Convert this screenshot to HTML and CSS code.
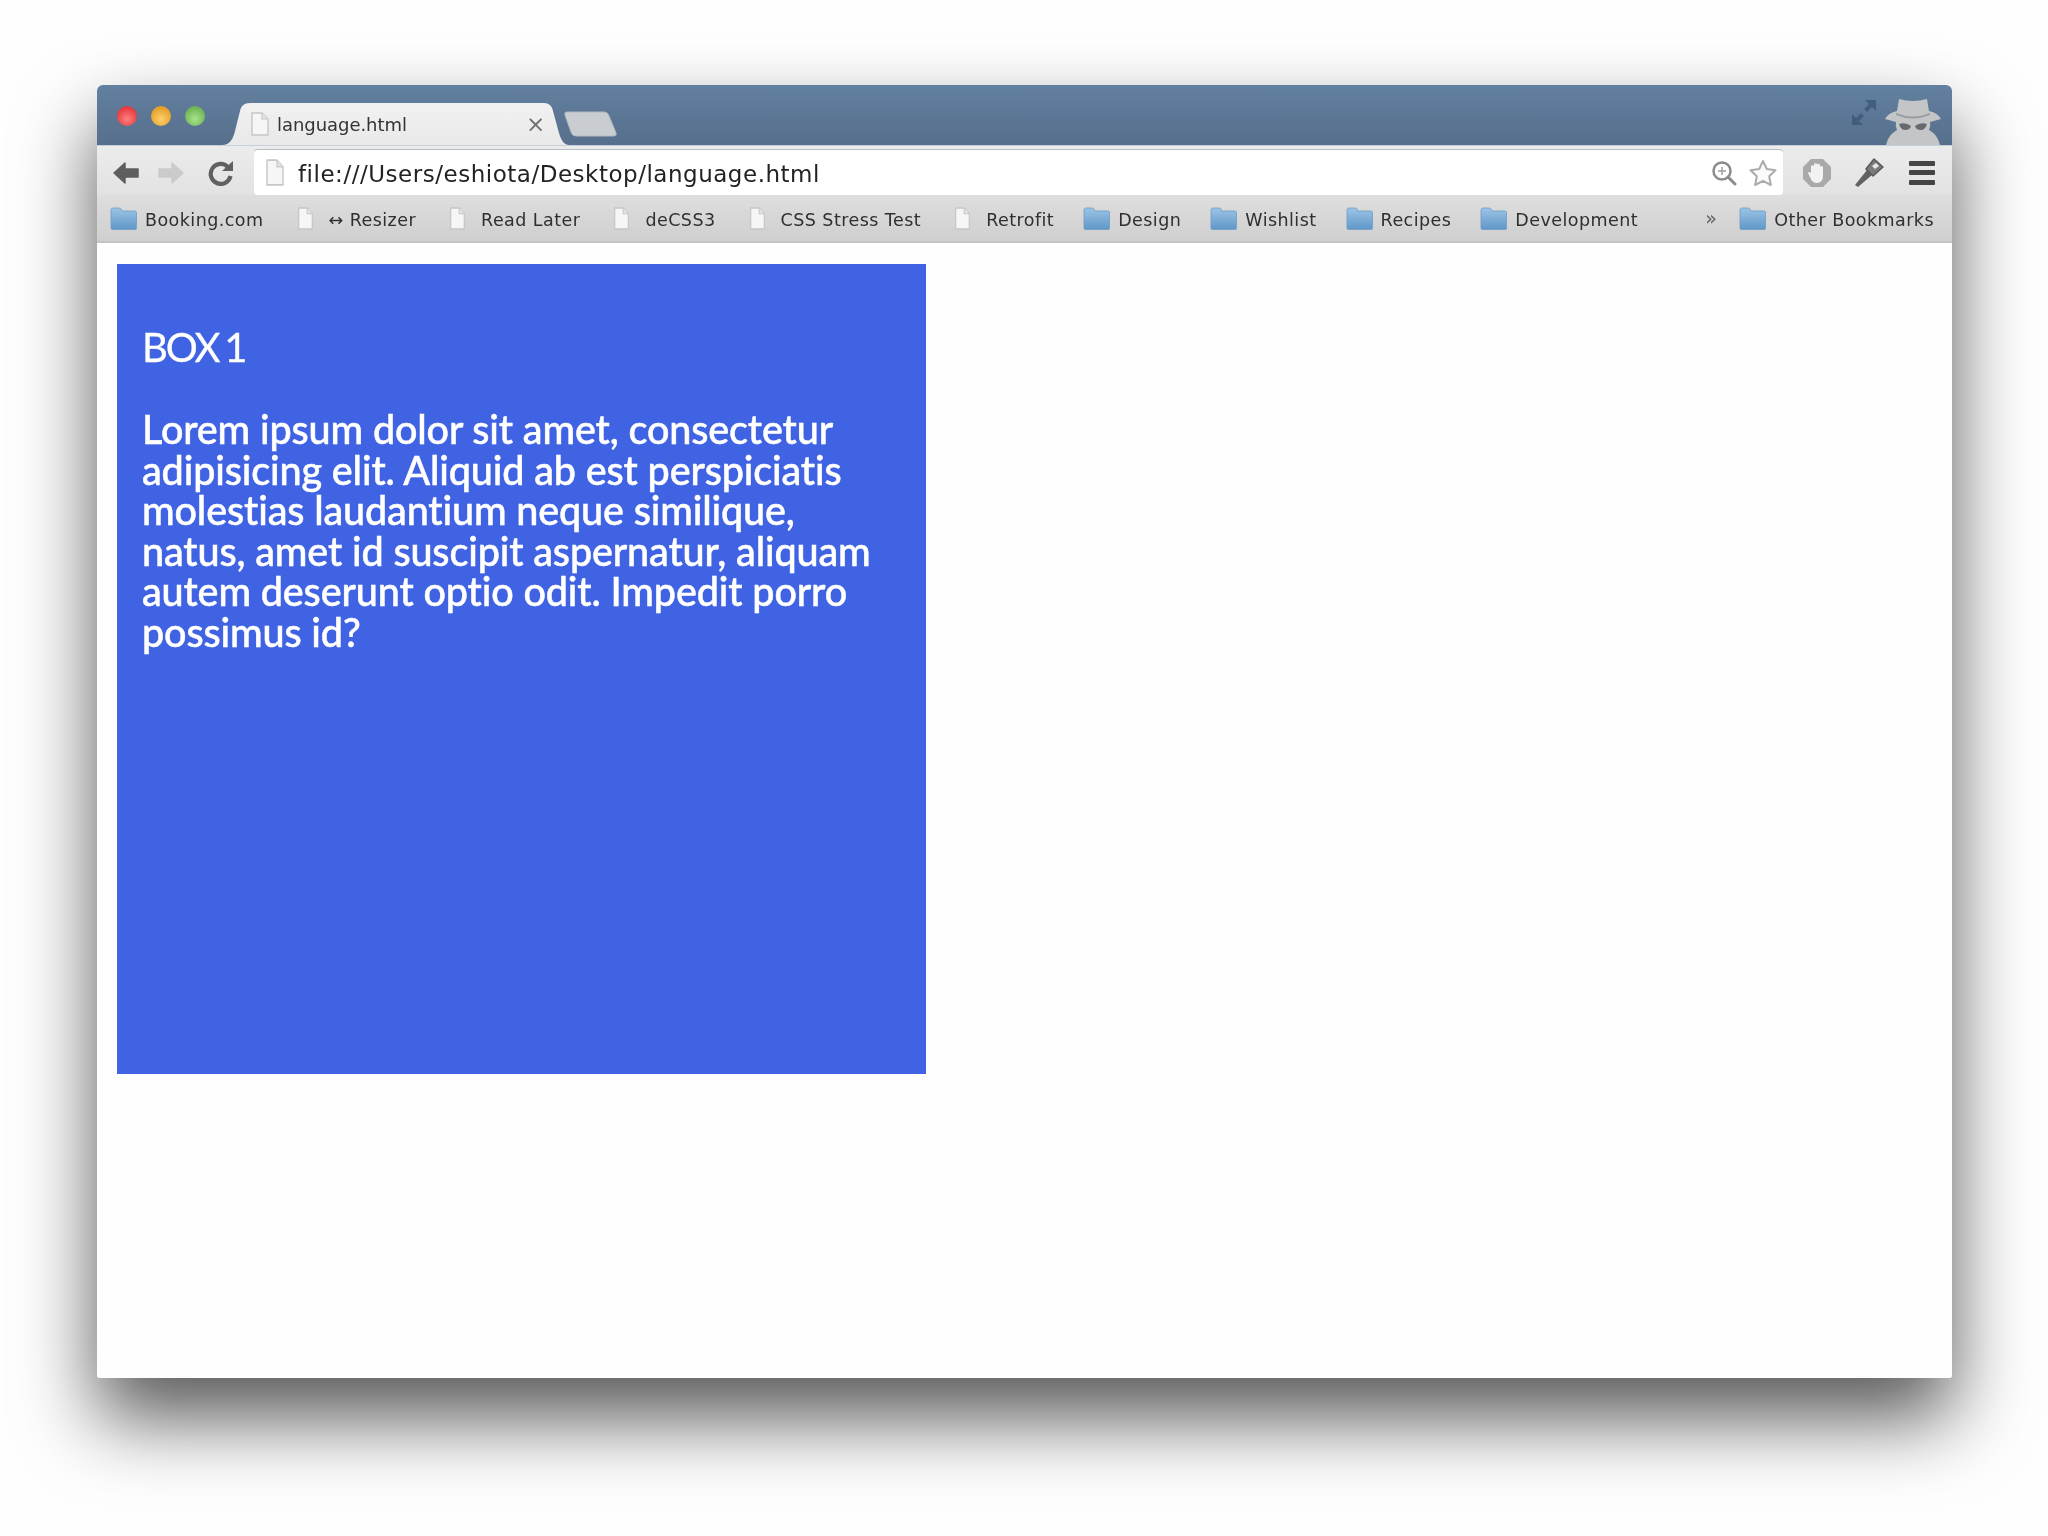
FILE: index.html
```html
<!DOCTYPE html>
<html lang="en">
<head>
<meta charset="utf-8">
<title>language.html</title>
<link rel="stylesheet" href="styles.css">
</head>
<body>
<svg class="defs" width="0" height="0" aria-hidden="true">
  <defs>
    <linearGradient id="folderFill" x1="0" y1="0" x2="0" y2="1"><stop offset="0" stop-color="#9cc4e6"/><stop offset="1" stop-color="#5f97c8"/></linearGradient>
    <linearGradient id="tabFill" x1="0" y1="0" x2="0" y2="1"><stop offset="0" stop-color="#f1f1f2"/><stop offset="1" stop-color="#e9e9ea"/></linearGradient>
    <symbol id="folder" viewBox="0 0 27 23" preserveAspectRatio="none"><path d="M1 3q0-2 2-2h6q2 0 3 3h13q1.500 0 1.500 1.500V21q0 1.500-1.500 1.500H2.500Q1 22.500 1 21z" fill="url(#folderFill)" stroke="#6f9cc4" stroke-width=".8"/></symbol>
    <symbol id="page" viewBox="0 0 20 24" preserveAspectRatio="none"><path d="M2 1h10l6 6v16H2z" fill="#f6f6f6" stroke="#c6c6c6" stroke-width="1.400"/><path d="M12 1v6h6" fill="#e4e4e4" stroke="#c6c6c6" stroke-width="1.200"/></symbol>
  </defs>
</svg>
<div class="stage">
  <div class="window">
    <div class="tabstrip">
      <div class="lights">
        <span class="light red"></span><span class="light amber"></span><span class="light green"></span>
      </div>
      <div class="tab">
        <svg class="tab-shape" viewBox="0 0 347 42" width="347" height="42"><path d="M0 42C8 42 11 36 13 28L18 8C19 3 22 0 28 0H322C327 0 330 3 331 8L337 30C339 37 342 42 347 42Z" fill="url(#tabFill)"/></svg>
        <svg class="tab-icon" width="20" height="24"><use href="#page"/></svg>
        <span class="tab-title">language.html</span>
        <span class="tab-close">×</span>
      </div>
      <svg class="newtab" viewBox="0 0 53 26" width="53" height="26"><path d="M3 1H40Q44 1 45 5L52 22Q53 25 49 25H12Q8 25 7 21L1 4Q0 1 3 1Z" fill="#c9cdd1" stroke="#b3bac1" stroke-width="1"/></svg>
      <div class="strip-space"></div>
      <svg class="fullscreen" viewBox="0 0 24 25" width="24" height="25"><g fill="#3f5f80"><path d="M24 0V11L20 7 15 12 12 9 17 4 13 0Z"/><path d="M0 25V14L4 18 9 13 12 16 7 21 11 25Z"/></g></svg>
      <svg class="incognito" viewBox="0 0 58 48" width="58" height="48"><path d="M15 2Q29 6 43 2L45 14Q54 16 57 22L46 25Q47 29 45 33Q54 38 56 48H2Q4 38 13 33Q11 29 12 25L1 22Q4 16 13 14Z" fill="#c3c5c7"/><path d="M12 16Q29 23 46 16V18Q29 25 12 18Z" fill="#9a9ea3"/><path d="M15 27Q22 25 27 29 26 33 21 33 17 33 15 27ZM31 29Q36 25 43 27 41 33 37 33 32 33 31 29Z" fill="#66696e"/></svg>
    </div>
    <div class="toolbar">
      <svg class="nav back" viewBox="0 0 28 26" width="28" height="26"><path d="M2 13 13 3V9H26V17H13V23Z" fill="#5e5e5e" stroke="#5e5e5e" stroke-width="1.500" stroke-linejoin="round"/></svg>
      <svg class="nav forward" viewBox="0 0 28 26" width="28" height="26"><path d="M26 13 15 3V9H2V17H15V23Z" fill="#cbcbcb" stroke="#cbcbcb" stroke-width="1.500" stroke-linejoin="round"/></svg>
      <svg class="nav reload" viewBox="0 0 28 26" width="28" height="26"><path d="M21 7A10 10 0 1 0 23.500 16" fill="none" stroke="#606060" stroke-width="4.200"/><path d="M15 11H26V1Z" fill="#606060"/></svg>
      <div class="omnibox">
        <svg class="omni-page" width="20" height="27"><use href="#page"/></svg>
        <span class="url">file:///Users/eshiota/Desktop/language.html</span>
        <svg class="omni-zoom" viewBox="0 0 26 26" width="26" height="26"><circle cx="11" cy="11" r="8.500" fill="none" stroke="#8c8c8c" stroke-width="2.500"/><path d="M7 11h8M11 7v8" stroke="#a0a0a0" stroke-width="1.500"/><path d="M17 17l7 7" stroke="#8c8c8c" stroke-width="3" stroke-linecap="round"/></svg>
        <svg class="omni-star" viewBox="0 0 28 28" width="28" height="28"><path d="M14 2 17.800 10 26.500 11.200 20.200 17.300 21.800 26 14 21.800 6.200 26 7.800 17.300 1.500 11.200 10.200 10Z" fill="#fbfbfb" stroke="#acacac" stroke-width="2" stroke-linejoin="round"/></svg>
      </div>
      <svg class="tool block" viewBox="0 0 30 30" width="30" height="30"><path d="M9 1H21L29 9V21L21 29H9L1 21V9Z" fill="#a9a9a9"/><path d="M9 13V8Q10.500 6.500 12 8V6Q13.500 4.500 15 6V6.500Q16.500 5 18 6.500V8.500Q19.500 7.500 21 9V18Q21 25 15 25 10 25 8 19L6 15Q7 13 9 15Z" fill="#f2f2f2"/></svg>
      <svg class="tool key" viewBox="0 0 30 30" width="30" height="30"><path d="M1 27 13 12 18 17 4 29Z" fill="#626262"/><path d="M12 11 20 1 29 9 19 18Z" fill="#7a7a7a" stroke="#5a5a5a" stroke-width="1.500" stroke-linejoin="round"/><path d="M18 8l4-3 3 3-4 3z" fill="#e6e6e6"/></svg>
      <div class="menu"><span></span><span></span><span></span></div>
    </div>
    <div class="bookmarks">
      <a class="bm folder first"><svg width="27" height="23"><use href="#folder"/></svg><span>Booking.com</span></a>
      <a class="bm"><svg width="17" height="23"><use href="#page"/></svg><span>↔ Resizer</span></a>
      <a class="bm"><svg width="17" height="23"><use href="#page"/></svg><span>Read Later</span></a>
      <a class="bm"><svg width="17" height="23"><use href="#page"/></svg><span>deCSS3</span></a>
      <a class="bm"><svg width="17" height="23"><use href="#page"/></svg><span>CSS Stress Test</span></a>
      <a class="bm"><svg width="17" height="23"><use href="#page"/></svg><span>Retrofit</span></a>
      <a class="bm folder"><svg width="27" height="23"><use href="#folder"/></svg><span>Design</span></a>
      <a class="bm folder"><svg width="27" height="23"><use href="#folder"/></svg><span>Wishlist</span></a>
      <a class="bm folder"><svg width="27" height="23"><use href="#folder"/></svg><span>Recipes</span></a>
      <a class="bm folder"><svg width="27" height="23"><use href="#folder"/></svg><span>Development</span></a>
      <span class="bm-space"></span>
      <span class="chevrons">»</span>
      <a class="bm folder other"><svg width="27" height="23"><use href="#folder"/></svg><span>Other Bookmarks</span></a>
    </div>
    <div class="content">
      <section class="box">
        <h1>BOX 1</h1>
        <p>Lorem ipsum dolor sit amet, consectetur<br>adipisicing elit. Aliquid ab est perspiciatis<br>molestias laudantium neque similique,<br>natus, amet id suscipit aspernatur, aliquam<br>autem deserunt optio odit. Impedit porro<br>possimus id?</p>
      </section>
    </div>
  </div>
</div>
</body>
</html>
```
FILE: styles.css
```css
* { box-sizing: border-box; }
html, body { margin: 0; height: 100%; background: #fefefe; overflow: hidden; }
.defs { position: absolute; }
.stage { padding: 85px 96px 0 97px; }
.window {
  width: 1855px; height: 1293px;
  display: flex; flex-direction: column;
  border-radius: 6px 6px 3px 3px;
  box-shadow: 0 40px 78px rgba(0,0,0,.66);
  background: #fefefe;
  filter: blur(.7px);
  overflow: hidden;
  font-family: "DejaVu Sans", sans-serif;
}
.tabstrip {
  height: 60px; flex: none;
  display: flex; align-items: flex-end;
  background: linear-gradient(#62809f, #566f8c);
  position: relative;
}
.lights { display: flex; gap: 14px; align-self: flex-start; margin: 21px 0 0 20px; width: 105px; }
.light { width: 20px; height: 20px; border-radius: 50%; }
.red { background: radial-gradient(circle at 50% 65%, #ff8080, #e43a3f 70%); }
.amber { background: radial-gradient(circle at 50% 65%, #ffd06a, #e5a02c 70%); }
.green { background: radial-gradient(circle at 50% 65%, #a8e38a, #6fb554 70%); }
.tab { position: relative; width: 347px; height: 42px; display: flex; align-items: center; flex: none; }
.tab-shape { position: absolute; left: 0; top: 0; }
.tab-icon { position: relative; margin-left: 28px; }
.tab-title { position: relative; margin-left: 7px; width: 249px; font-size: 18px; color: #333; letter-spacing: -.05px; }
.tab-close { position: relative; font-size: 23px; line-height: 1; color: #707070; }
.newtab { flex: none; margin: 0 0 8px -5px; }
.strip-space { flex: 1; }
.fullscreen { flex: none; align-self: flex-start; margin: 15px 8px 0 0; }
.incognito { flex: none; margin-right: 10px; }
.toolbar {
  height: 50px; flex: none;
  display: flex; align-items: center;
  padding: 5px 0 0 15px;
  background: linear-gradient(#ececec, #e2e2e2);
  box-shadow: inset 0 1px 0 #c5d0db;
}
.nav { flex: none; }
.forward { margin-left: 17px; }
.reload { margin-left: 22px; }
.omnibox {
  width: 1529px; height: 45px; margin-left: 19px; flex: none;
  display: flex; align-items: center;
  background: #fff; border-radius: 4px;
  box-shadow: 0 -1px 0 #b9bcc0;
  padding: 0 6px 0 11px;
}
.omni-page { flex: none; }
.url { flex: 1; margin: 2px 0 0 13px; font-size: 23px; color: #222; letter-spacing: .52px; white-space: nowrap; }
.omni-zoom { margin-right: 12px; flex: none; }
.tool { flex: none; }
.block { margin-left: 19px; }
.key { margin-left: 22px; }
.menu { margin-left: 25px; display: flex; flex-direction: column; gap: 4.5px; width: 26px; flex: none; }
.menu span { height: 5px; background: #454545; border-radius: 1px; }
.bookmarks {
  height: 48px; flex: none;
  display: flex; align-items: center;
  padding: 0 18px 0 13px;
  background: linear-gradient(#dedede, #cfcfcf);
  border-bottom: 2px solid #c4c4c4;
  font-size: 17.5px; letter-spacing: .45px; color: #2f2f2f;
}
.bm { display: flex; align-items: center; gap: 15px; margin-left: 33px; white-space: nowrap; }
.bm span { padding-top: 3px; }
.bm svg { flex: none; }
.bm.folder { gap: 8px; margin-left: 29px; }
.bm.first { margin-left: 0; }
.bm.other { margin-left: 23px; }
.bm-space { flex: 1; }
.chevrons { font-size: 19px; color: #666; margin-right: -1px; }
.content { flex: 1; background: #fefefe; padding: 21px 0 0 20px; }
.box {
  width: 809px; height: 810px;
  background: #4063e4;
  color: #fff;
  padding: 58px 25px 0;
  font-family: Lato, sans-serif;
}
.box h1 { margin: 0; font-size: 40px; line-height: 50px; font-weight: 400; letter-spacing: -2.2px; word-spacing: -2px; -webkit-text-stroke: .3px #fff; }
.box p { margin: 37px 0 0; font-size: 39.500px; line-height: 40.500px; font-weight: 500; letter-spacing: -.13px; -webkit-text-stroke: .5px #fff; }
```
